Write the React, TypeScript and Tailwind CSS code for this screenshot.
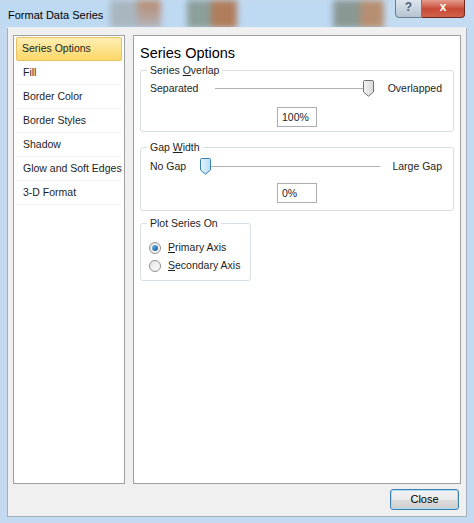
import React from "react";

const font = { fontFamily: '"Liberation Sans", Arial, sans-serif' };

const navItems = [
  "Series Options",
  "Fill",
  "Border Color",
  "Border Styles",
  "Shadow",
  "Glow and Soft Edges",
  "3-D Format",
];

const Thumb = ({ active }: { active?: boolean }) => (
  <svg width="11" height="17" viewBox="0 0 11 17" className="block">
    <defs>
      <linearGradient id={active ? "ta" : "tn"} x1="0" x2="1" y1="0" y2="0">
        <stop offset="0" stopColor={active ? "#e3f4fc" : "#f4f4f4"} />
        <stop offset="1" stopColor={active ? "#b6e0f5" : "#d8d8d8"} />
      </linearGradient>
    </defs>
    <path
      d="M1.5 0.5 H9.5 Q10.5 0.5 10.5 1.5 V12 L5.5 16.2 L0.5 12 V1.5 Q0.5 0.5 1.5 0.5 Z"
      fill={`url(#${active ? "ta" : "tn"})`}
      stroke={active ? "#3c7fb1" : "#707070"}
    />
  </svg>
);

// track offset/width differ a little between the two sliders in the original
const Slider = ({
  left,
  right,
  trackLeft,
  trackWidth,
  pos,
  active,
}: {
  left: string;
  right: string;
  trackLeft: number;
  trackWidth: number;
  pos: number;
  active?: boolean;
}) => (
  <div className="flex items-center h-[18px]">
    <span className="pl-[9px]" style={{ width: trackLeft }}>
      {left}
    </span>
    <div className="relative h-[18px] flex items-center" style={{ width: trackWidth }}>
      <div className="w-full h-[2px] border-t border-[#b0b0b0] border-b-white" />
      <div className="absolute top-[0px]" style={{ left: pos }}>
        <Thumb active={active} />
      </div>
    </div>
    <span className="flex-1 text-right pr-[11px]">{right}</span>
  </div>
);

const Field = ({ value }: { value: string }) => (
  <div className="ml-[136px] w-[40px] h-[20px] border border-[#abadb3] bg-white pl-[4px] leading-[18px]">
    {value}
  </div>
);

const Radio = ({ checked, label, u }: { checked?: boolean; label: string; u: string }) => (
  <div className="flex items-center gap-[7px] h-[18px]">
    <div className="w-[12px] h-[12px] rounded-full border border-[#8e8f8f] bg-gradient-to-br from-[#e6e6e6] to-[#fafafa] flex items-center justify-center">
      {checked && (
        <div className="w-[6px] h-[6px] rounded-full bg-gradient-to-br from-[#7cc1ec] to-[#0f4d8b]" />
      )}
    </div>
    <span>
      <span className="underline">{u}</span>
      {label.slice(1)}
    </span>
  </div>
);

export default function App() {
  return (
    <div
      className="w-[474px] h-[523px] bg-[#c3daf1] flex flex-col overflow-hidden text-[10.5px] text-[#1e1e1e]"
      style={font}
    >
      {/* title bar */}
      <div className="relative h-[28px] shrink-0 overflow-hidden">
        <div className="absolute inset-0 flex blur-[3px]">
          <div className="w-[110px] bg-[#bed9f2]" />
          <div className="w-[27px] bg-[#a9b6c0]" />
          <div className="w-[24px] bg-[linear-gradient(#b88a6e,#b3b3bb)]" />
          <div className="w-[26px] bg-[#bed9f2]" />
          <div className="w-[24px] bg-[#8c9f9a]" />
          <div className="w-[26px] bg-[#b07d5c]" />
          <div className="w-[96px] bg-[#bed9f2]" />
          <div className="w-[27px] bg-[#8a9894]" />
          <div className="w-[24px] bg-[#b68f72]" />
          <div className="flex-1 bg-[#c4dcf2]" />
        </div>
        <div className="relative pl-[8px] pt-[7px] text-[11px] text-black">
          Format Data Series
        </div>
        <div className="absolute top-[-2px] right-[9px] flex">
          <div className="w-[27px] h-[20px] rounded-bl-[4px] border border-[#6b7a8c] bg-[linear-gradient(#dfe7ef,#b5c3d1)] flex items-end justify-center pb-[1px] text-[12px] font-bold text-[#4d5e72]">
            ?
          </div>
          <div className="w-[43px] h-[20px] rounded-br-[4px] border border-l-0 border-[#6b2a22] bg-[linear-gradient(#e8a596,#c74a36_55%,#d0624b)] flex items-end justify-center pb-[1px] text-[12px] font-bold text-white">
            x
          </div>
        </div>
        <div className="absolute left-[7px] right-[7px] bottom-0 h-px bg-[#e8eef5]" />
      </div>

      {/* client area */}
      <div className="mx-[7px] flex-1 bg-[#f0f0f0] border-x border-[#9fb0c2] flex flex-col">
        <div className="flex gap-[8px] px-[5px] pt-[7px] h-[456px]">
          {/* left nav */}
          <div className="w-[112px] bg-white border border-[#a0a0a0] px-[2px] pt-[1px] whitespace-nowrap">
            {navItems.map((item, i) => (
              <div
                key={item}
                className={
                  i === 0
                    ? "h-[24px] flex items-center pl-[5px] rounded-[2px] border border-[#e5c365] bg-[linear-gradient(#fdeeb3,#fcd868)]"
                    : "h-[24px] flex items-center pl-[6px] border-b border-[#f0f0f0] mx-[1px]"
                }
              >
                {item}
              </div>
            ))}
          </div>

          {/* right panel */}
          <div className="flex-1 bg-white border border-[#a0a0a0] px-[6px]">
            <div className="text-[14.5px] pt-[7px] h-[27px] text-black">Series Options</div>

            <fieldset className="border border-[#d5dfe5] rounded-[3px] h-[69px]">
              <legend className="ml-[6px] px-[3px]">
                Series <span className="underline">O</span>verlap
              </legend>
              <div className="pt-[1px]">
                <Slider
                  left="Separated"
                  right="Overlapped"
                  trackLeft={74}
                  trackWidth={158}
                  pos={148}
                />
              </div>
              <div className="pt-[9px]">
                <Field value="100%" />
              </div>
            </fieldset>

            <fieldset className="border border-[#d5dfe5] rounded-[3px] h-[71px] mt-[8px]">
              <legend className="ml-[6px] px-[3px]">
                Gap <span className="underline">W</span>idth
              </legend>
              <div className="pt-[2px]">
                <Slider
                  left="No Gap"
                  right="Large Gap"
                  trackLeft={67}
                  trackWidth={172}
                  pos={-8}
                  active
                />
              </div>
              <div className="pt-[7px]">
                <Field value="0%" />
              </div>
            </fieldset>

            <fieldset className="border border-[#d5dfe5] rounded-[3px] w-[111px] h-[65px] mt-[5px] pl-[8px]">
              <legend className="ml-[-2px] px-[3px]">Plot Series On</legend>
              <div className="pt-[7px]">
                <Radio checked u="P" label="Primary Axis" />
                <Radio u="S" label="Secondary Axis" />
              </div>
            </fieldset>
          </div>
        </div>

        {/* footer */}
        <div className="flex justify-end pr-[7px] pt-[5px]">
          <button className="w-[69px] h-[21px] rounded-[3px] border border-[#3c7fb1] bg-[linear-gradient(#f2f2f2,#ebebeb_50%,#dddddd_51%,#cfcfcf)] text-[11px] text-black shadow-[inset_0_0_0_1px_#a9dcf6]">
            Close
          </button>
        </div>
      </div>
      <div className="h-[7px] shrink-0 border-t border-[#9fb0c2] mx-[7px]" />
    </div>
  );
}
